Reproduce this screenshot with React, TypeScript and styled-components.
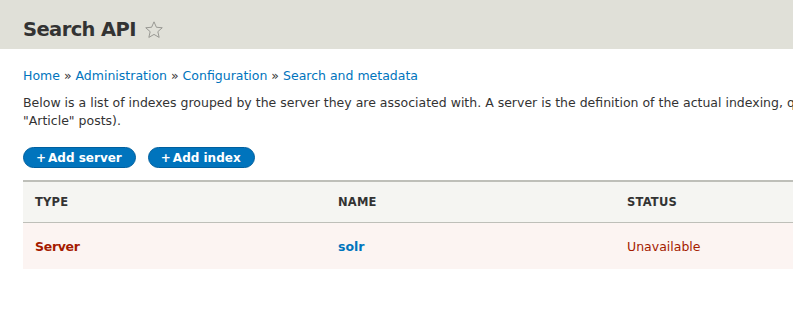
import styled, { createGlobalStyle } from 'styled-components';

const GlobalStyle = createGlobalStyle`
  html, body {
    margin: 0;
    padding: 0;
    background: #fff;
    overflow: hidden;
  }
  body {
    font-family: "DejaVu Sans", "Lucida Grande", Verdana, sans-serif;
    font-size: 12.5px;
    color: #333;
  }
`;

const Page = styled.div`
  width: 1800px;
`;

const Header = styled.header`
  background: #e0e0d8;
  height: 49px;
  box-sizing: border-box;
  padding: 18px 23px 0;
`;

const Title = styled.h1`
  margin: 0;
  font-size: 19.5px;
  line-height: 24px;
  font-weight: 700;
  color: #333;
  display: flex;
  align-items: center;
  gap: 8px;
  letter-spacing: -0.6px;
`;

const Star = styled.svg`
  width: 20px;
  height: 20px;
`;

const Content = styled.main`
  padding: 18px 23px 0;
`;

const Breadcrumb = styled.nav`
  line-height: 18px;
  color: #333;

  a {
    color: #0074bd;
    text-decoration: none;
  }
`;

const Intro = styled.p`
  margin: 9px 0 0;
  line-height: 18px;
  white-space: nowrap;
`;

const Actions = styled.div`
  display: flex;
  gap: 12px;
  margin-top: 17px;
`;

const ActionButton = styled.a`
  display: inline-flex;
  align-items: center;
  height: 21px;
  padding: 0 13px 0 12px;
  border-radius: 11px;
  background: #0074bd;
  border: 1px solid #005f9e;
  box-sizing: border-box;
  color: #fff;
  font-weight: 700;
  font-size: 12px;
  text-decoration: none;

  span {
    margin-right: 2px;
  }
`;

const Table = styled.table`
  margin-top: 12px;
  width: 1200px;
  border-collapse: collapse;
  border-top: 2px solid #bebfb9;

  th {
    background: #f5f5f2;
    height: 40px;
    padding: 0 12px;
    text-align: left;
    font-size: 11.5px;
    font-weight: 700;
    letter-spacing: 0.2px;
    text-transform: uppercase;
    color: #333;
    border-bottom: 1px solid #bebfb9;
  }

  td {
    background: #fcf4f2;
    height: 46px;
    padding: 0 12px;
  }
`;

const TypeCell = styled.td`
  color: #a51b00;
  font-weight: 700;
  letter-spacing: -0.3px;
`;

const NameLink = styled.a`
  color: #0074bd;
  font-weight: 700;
  text-decoration: none;
`;

const StatusCell = styled.td`
  color: #a51b00;
`;

export default function App() {
  return (
    <Page>
      <GlobalStyle />
      <Header>
        <Title>
          Search API
          <Star viewBox="0 0 24 24">
            <path
              d="M12 2.2l2.9 6.5 7 .6-5.3 4.7 1.6 6.9L12 17.3l-6.2 3.6 1.6-6.9-5.3-4.7 7-.6z"
              fill="none"
              stroke="#8a8a85"
              strokeWidth="1"
              strokeLinejoin="round"
            />
          </Star>
        </Title>
      </Header>
      <Content>
        <Breadcrumb>
          <a href="#">Home</a> » <a href="#">Administration</a> » <a href="#">Configuration</a> »{' '}
          <a href="#">Search and metadata</a>
        </Breadcrumb>
        <Intro>
          Below is a list of indexes grouped by the server they are associated with. A server is the definition of the
          actual indexing, querying and storage engine (e.g., an Apache Solr server, the database, …). An index is a
          collection of content items of a certain type (e.g.,
          <br />
          "Article" posts).
        </Intro>
        <Actions>
          <ActionButton href="#">
            <span>+</span>Add server
          </ActionButton>
          <ActionButton href="#">
            <span>+</span>Add index
          </ActionButton>
        </Actions>
        <Table>
          <colgroup>
            <col style={{ width: 303 }} />
            <col style={{ width: 289 }} />
            <col />
          </colgroup>
          <thead>
            <tr>
              <th>Type</th>
              <th>Name</th>
              <th>Status</th>
            </tr>
          </thead>
          <tbody>
            <tr>
              <TypeCell>Server</TypeCell>
              <td>
                <NameLink href="#">solr</NameLink>
              </td>
              <StatusCell>Unavailable</StatusCell>
            </tr>
          </tbody>
        </Table>
      </Content>
    </Page>
  );
}
